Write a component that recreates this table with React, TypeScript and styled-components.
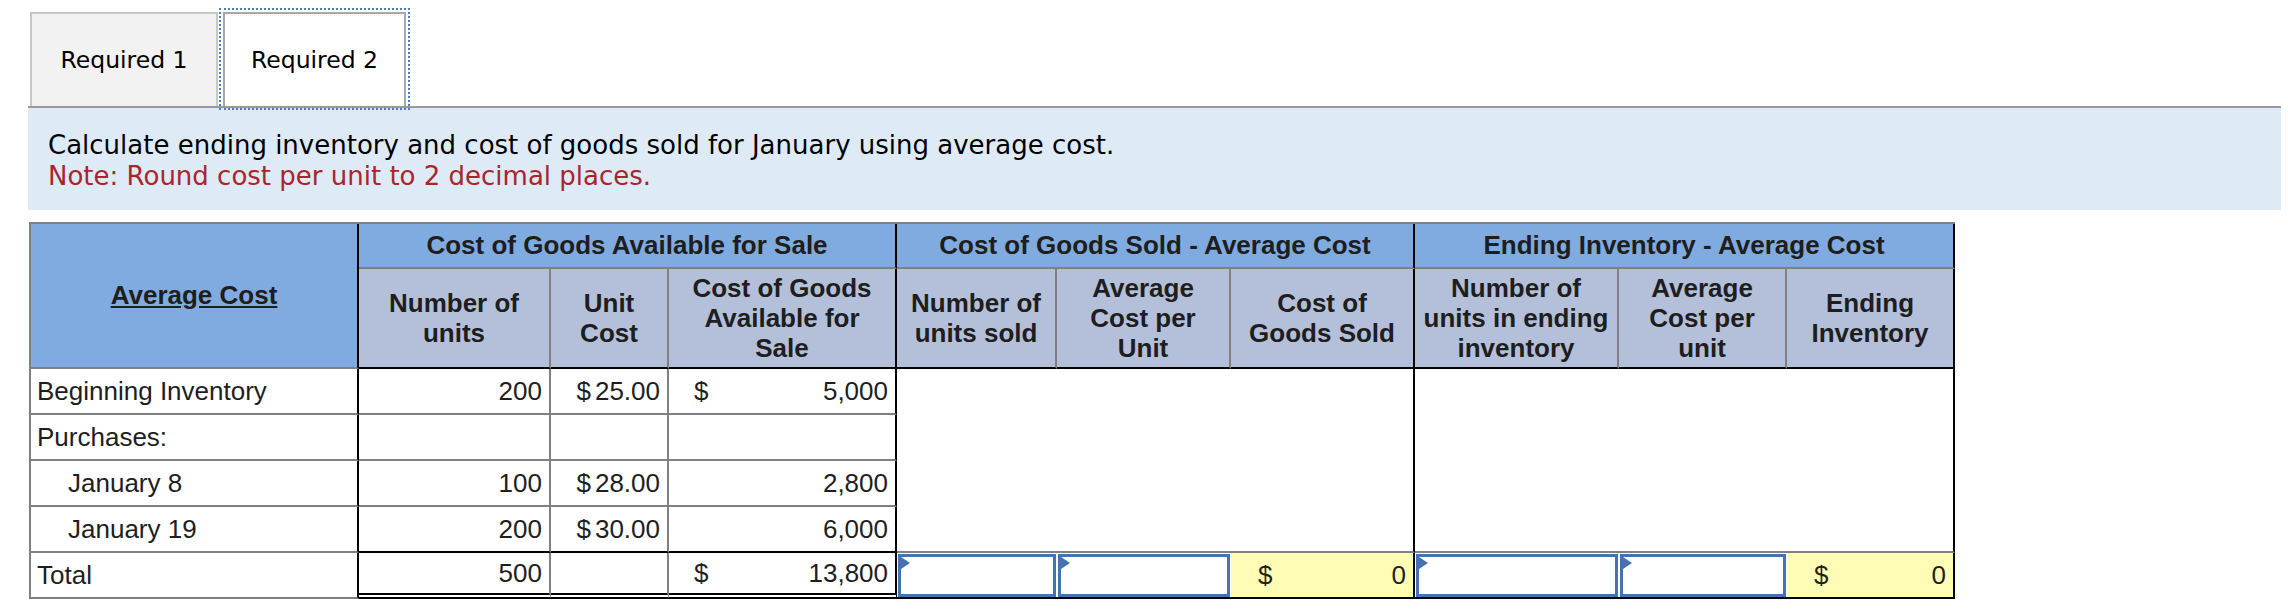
import React from 'react';
import styled, { createGlobalStyle } from 'styled-components';

const GRAY = '#808080';
const BLACK = '#000';
const BLUE = '#4672b4';

const GlobalStyle = createGlobalStyle`
  html, body { margin: 0; padding: 0; background: #fff; }
  *, *::before, *::after { box-sizing: border-box; }
`;

const Page = styled.div`
  width: 2288px;
  padding: 9px 7px 0 28px;
`;

const TabBar = styled.div`
  display: flex;
  align-items: flex-end;
  gap: 5px;
  height: 99px;
  padding-left: 2px;
  border-bottom: 2px solid #999;
`;

const Tab = styled.button<{ $active?: boolean }>`
  height: 94px;
  width: ${p => (p.$active ? 183 : 188)}px;
  margin: 0;
  padding: 0;
  font-family: "DejaVu Sans", Verdana, sans-serif;
  font-size: 23.5px;
  color: #000;
  background: ${p => (p.$active ? '#fff' : '#f2f2f2')};
  border: 2px solid ${p => (p.$active ? '#a8a8a8' : '#c8c8c8')};
  border-bottom: none;
  outline: ${p => (p.$active ? `2px dotted #4a7cc4` : 'none')};
  outline-offset: 2px;
  position: relative;
  z-index: ${p => (p.$active ? 1 : 0)};
`;

const Instructions = styled.div`
  height: 102px;
  background: #deebf7;
  padding: 22px 20px 0;
  font-family: "DejaVu Sans", Verdana, sans-serif;
  font-size: 26px;
  line-height: 31px;
  color: #000;
`;

const Note = styled.div`
  color: #a8262a;
`;

const Table = styled.table`
  border-collapse: separate;
  border-spacing: 0;
  table-layout: fixed;
  width: 1926px;
  margin: 12px 0 0 1px;
  border-top: 2px solid ${GRAY};
  border-left: 2px solid ${GRAY};
  font-family: "Liberation Sans", Arial, Helvetica, sans-serif;
  font-size: 26px;
  color: #1e1e1e;
`;

const GroupHead = styled.th`
  height: 45px;
  background: #80abe0;
  border-right: 2px solid ${BLACK};
  border-bottom: 2px solid ${GRAY};
  padding: 0 7px;
  font-weight: bold;
  text-align: center;
  vertical-align: middle;
  white-space: nowrap;
`;

const CornerHead = styled(GroupHead)`
  text-decoration: underline;
  vertical-align: middle;
`;

const SubHead = styled.th<{ $groupEnd?: boolean }>`
  height: 100px;
  background: #b4c0da;
  border-right: 2px solid ${p => (p.$groupEnd ? BLACK : GRAY)};
  border-bottom: 2px solid ${BLACK};
  padding: 0 7px;
  font-weight: bold;
  line-height: 30px;
  text-align: center;
  vertical-align: middle;
`;

const LabelCell = styled.td<{ $indent?: boolean }>`
  height: 46px;
  border-right: 2px solid ${BLACK};
  border-bottom: 2px solid ${GRAY};
  padding: 0 0 0 ${p => (p.$indent ? 37 : 6)}px;
  white-space: nowrap;
  vertical-align: middle;
`;

type Bottom = 'gray' | 'black' | 'double';
const bottomLine = (b: Bottom) =>
  b === 'gray' ? `2px solid ${GRAY}` : b === 'black' ? `2px solid ${BLACK}` : `6px double ${BLACK}`;

const ValueCell = styled.td<{ $bottom: Bottom; $groupEnd?: boolean }>`
  height: 46px;
  border-right: 2px solid ${p => (p.$groupEnd ? BLACK : GRAY)};
  border-bottom: ${p => bottomLine(p.$bottom)};
  padding: 0 7px 0 25px;
  text-align: right;
  white-space: nowrap;
  vertical-align: middle;
`;

const Dollar = styled.span`
  margin-right: 4px;
`;

const Money = styled.div`
  display: flex;
  justify-content: space-between;
  align-items: center;
`;

const BlankCell = styled.td`
  border-right: 2px solid ${BLACK};
  border-bottom: 2px solid ${GRAY};
  background: #fff;
`;

const InputCell = styled.td`
  height: 46px;
  padding: 0 1px 0 1px;
  border-bottom: 2px solid ${BLACK};
  vertical-align: middle;
`;

const InputBox = styled.div`
  position: relative;
  height: 43px;
  border: 3px solid ${BLUE};
  background: #fff;
  &::before {
    content: '';
    position: absolute;
    left: 0;
    top: 0;
    border-left: 9px solid ${BLUE};
    border-top: 6px solid transparent;
    border-bottom: 6px solid transparent;
  }
`;

const SumCell = styled.td`
  height: 46px;
  background: #fffdb5;
  border-right: 2px solid ${BLACK};
  border-bottom: 2px solid ${BLACK};
  padding: 0 7px 0 27px;
  vertical-align: middle;
  white-space: nowrap;
`;

const widths = [328, 192, 118, 228, 160, 174, 184, 204, 168, 168];

const rows = [
  { label: 'Beginning Inventory', indent: false, units: '200', cost: '25.00', total: '5,000', dollar: true },
  { label: 'Purchases:', indent: false, units: '', cost: '', total: '', dollar: false },
  { label: 'January 8', indent: true, units: '100', cost: '28.00', total: '2,800', dollar: false },
  { label: 'January 19', indent: true, units: '200', cost: '30.00', total: '6,000', dollar: false },
];

export default function App() {
  return (
    <>
      <GlobalStyle />
      <Page>
        <TabBar>
          <Tab>Required 1</Tab>
          <Tab $active>Required 2</Tab>
        </TabBar>
        <Instructions>
          <div>Calculate ending inventory and cost of goods sold for January using average cost.</div>
          <Note>Note: Round cost per unit to 2 decimal places.</Note>
        </Instructions>
        <Table>
          <colgroup>
            {widths.map((w, i) => (
              <col key={i} style={{ width: w }} />
            ))}
          </colgroup>
          <thead>
            <tr>
              <CornerHead rowSpan={2}>Average Cost</CornerHead>
              <GroupHead colSpan={3}>Cost of Goods Available for Sale</GroupHead>
              <GroupHead colSpan={3}>Cost of Goods Sold - Average Cost</GroupHead>
              <GroupHead colSpan={3}>Ending Inventory - Average Cost</GroupHead>
            </tr>
            <tr>
              <SubHead>Number of units</SubHead>
              <SubHead>Unit Cost</SubHead>
              <SubHead $groupEnd>Cost of Goods Available for Sale</SubHead>
              <SubHead>Number of units sold</SubHead>
              <SubHead>Average Cost per Unit</SubHead>
              <SubHead $groupEnd>Cost of Goods Sold</SubHead>
              <SubHead>Number of units in ending inventory</SubHead>
              <SubHead>Average Cost per unit</SubHead>
              <SubHead $groupEnd>Ending Inventory</SubHead>
            </tr>
          </thead>
          <tbody>
            {rows.map((r, i) => {
              const bottom: Bottom = i === rows.length - 1 ? 'black' : 'gray';
              return (
                <tr key={r.label}>
                  <LabelCell $indent={r.indent}>{r.label}</LabelCell>
                  <ValueCell $bottom={bottom}>{r.units}</ValueCell>
                  <ValueCell $bottom={bottom}>
                    {r.cost && (
                      <>
                        <Dollar>$</Dollar>
                        {r.cost}
                      </>
                    )}
                  </ValueCell>
                  <ValueCell $bottom={bottom} $groupEnd>
                    <Money>
                      <span>{r.dollar ? '$' : ''}</span>
                      <span>{r.total}</span>
                    </Money>
                  </ValueCell>
                  {i === 0 && (
                    <>
                      <BlankCell colSpan={3} rowSpan={4} />
                      <BlankCell colSpan={3} rowSpan={4} />
                    </>
                  )}
                </tr>
              );
            })}
            <tr>
              <LabelCell>Total</LabelCell>
              <ValueCell $bottom="double">500</ValueCell>
              <ValueCell $bottom="double" />
              <ValueCell $bottom="double" $groupEnd>
                <Money>
                  <span>$</span>
                  <span>13,800</span>
                </Money>
              </ValueCell>
              <InputCell>
                <InputBox />
              </InputCell>
              <InputCell>
                <InputBox />
              </InputCell>
              <SumCell>
                <Money>
                  <span>$</span>
                  <span>0</span>
                </Money>
              </SumCell>
              <InputCell>
                <InputBox />
              </InputCell>
              <InputCell>
                <InputBox />
              </InputCell>
              <SumCell>
                <Money>
                  <span>$</span>
                  <span>0</span>
                </Money>
              </SumCell>
            </tr>
          </tbody>
        </Table>
      </Page>
    </>
  );
}
